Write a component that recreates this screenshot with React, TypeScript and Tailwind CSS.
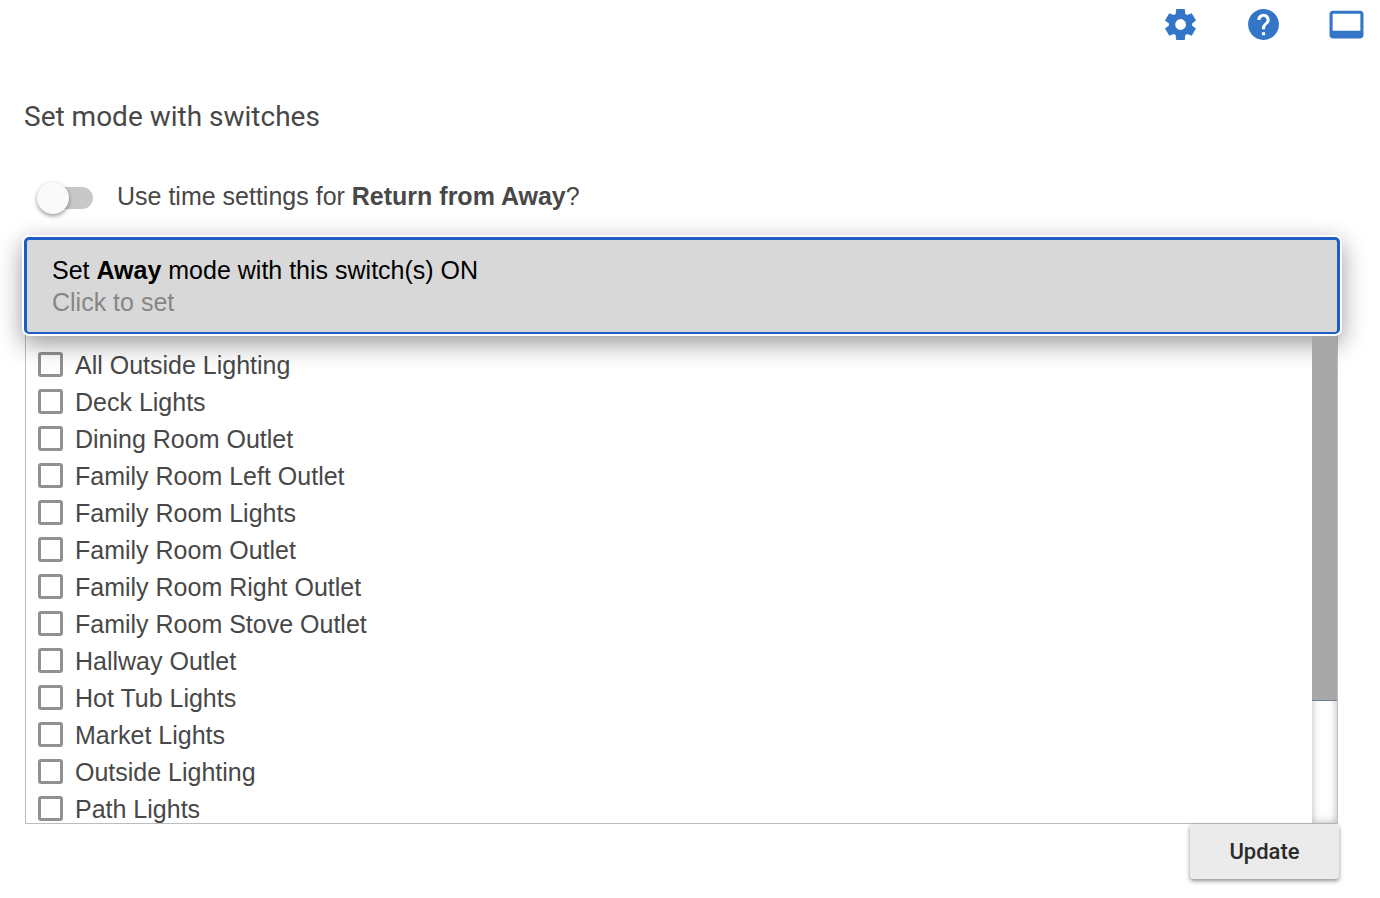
import { useState } from "react";
import { MdHelp } from "react-icons/md";

const switches = [
  "All Outside Lighting",
  "Deck Lights",
  "Dining Room Outlet",
  "Family Room Left Outlet",
  "Family Room Lights",
  "Family Room Outlet",
  "Family Room Right Outlet",
  "Family Room Stove Outlet",
  "Hallway Outlet",
  "Hot Tub Lights",
  "Market Lights",
  "Outside Lighting",
  "Path Lights",
];

function GearIcon() {
  return (
    <svg viewBox="0 -960 960 960" className="size-[37px]" fill="currentColor" aria-hidden="true">
      <path d="m370-80-16-128q-13-5-24.500-12T307-235l-119 50L78-375l103-78q-1-7-1-13.500v-27q0-6.500 1-13.500L78-585l110-190 119 50q11-8 23-15t24-12l16-128h220l16 128q13 5 24.500 12t22.500 15l119-50 110 190-103 78q1 7 1 13.500v27q0 6.500-2 13.500l103 78-110 190-118-50q-11 8-23 15t-24 12L590-80H370Zm112-260q58 0 99-41t41-99q0-58-41-99t-99-41q-59 0-99.500 41T342-480q0 58 40.500 99t99.500 41Z" />
    </svg>
  );
}

function PanelIcon() {
  return (
    <svg viewBox="0 0 24 24" className="size-[37px]" fill="currentColor" aria-hidden="true">
      <path d="M21 3H3c-1.1 0-2 .9-2 2v14c0 1.1.9 2 2 2h18c1.1 0 2-.9 2-2V5c0-1.1-.9-2-2-2zm0 13H3V5h18v11z" />
    </svg>
  );
}

function Toolbar() {
  return (
    <header className="flex justify-end gap-[46px] pt-1.5 pr-[15px] text-[#3375c6]">
      <button type="button" aria-label="Settings">
        <GearIcon />
      </button>
      <button type="button" aria-label="Help">
        <MdHelp className="size-[37px]" />
      </button>
      <button type="button" aria-label="Panel">
        <PanelIcon />
      </button>
    </header>
  );
}

function TimeToggle() {
  const [on, setOn] = useState(false);
  return (
    <label className="mt-[45px] flex h-8 items-center gap-6 pl-[13px] text-[25px] leading-8">
      <input
        type="checkbox"
        role="switch"
        checked={on}
        onChange={() => setOn(!on)}
        className="mt-1 flex h-[22px] w-14 shrink-0 appearance-none items-center rounded-full bg-[linear-gradient(90deg,transparent_16px,#c8c8c8_16px)] before:size-8 before:shrink-0 before:rounded-full before:bg-[#fafafa] before:shadow-[0_2px_4px_rgba(0,0,0,0.4)] checked:before:ml-6"
      />
      <span>
        Use time settings for <b>Return from Away</b>?
      </span>
    </label>
  );
}

function SwitchList() {
  return (
    <div className="mr-0.5 ml-px flex h-[490px] border border-t-0 border-[#bdbdbd]">
      <ul className="flex-1 overflow-hidden pt-3 pl-3">
        {switches.map((name) => (
          <li key={name}>
            <label className="flex h-[37px] items-center gap-3 text-[25px] leading-8">
              <input
                type="checkbox"
                className="size-[25px] shrink-0 appearance-none rounded-[3px] border-3 border-[#919191] bg-white checked:bg-[#3375c6]"
              />
              {name}
            </label>
          </li>
        ))}
      </ul>
      <div className="relative z-20 mt-0.5 w-[25px] bg-white shadow-[inset_0_0_8px_rgba(0,0,0,0.3)]">
        <div className="h-3/4 border-b border-[#6f7c95] bg-[#a8a8a8]" />
      </div>
    </div>
  );
}

export default function App() {
  return (
    <div className="bg-white font-['Liberation_Sans',Arial,sans-serif] text-[#484848]">
      <Toolbar />
      <main className="pt-14 pr-10 pb-4 pl-6">
        <h1 className="font-[Roboto,sans-serif] text-[28px] leading-9">Set mode with switches</h1>
        <TimeToggle />
        <button
          type="button"
          className="relative z-10 mt-[25px] block w-full rounded-[5px] border-3 border-b-2 border-[#1f5cc4] bg-[#d8d8d8] px-[25px] py-3.5 text-left text-[25px] leading-8 text-black shadow-[0_0_0_2px_#fff,0_8px_24px_2px_rgba(0,0,0,0.4)]"
        >
          <span className="block">
            Set <b>Away</b> mode with this switch(s) ON
          </span>
          <span className="block text-[#868686]">Click to set</span>
        </button>
        <SwitchList />
        <div className="flex justify-end pr-px">
          <button
            type="button"
            className="h-[55px] w-[149px] rounded-[3px] bg-[#ebebeb] font-[Roboto,sans-serif] text-[22px] font-medium text-[#2b2b2b] shadow-[0_2px_4px_rgba(0,0,0,0.45)]"
          >
            Update
          </button>
        </div>
      </main>
    </div>
  );
}
